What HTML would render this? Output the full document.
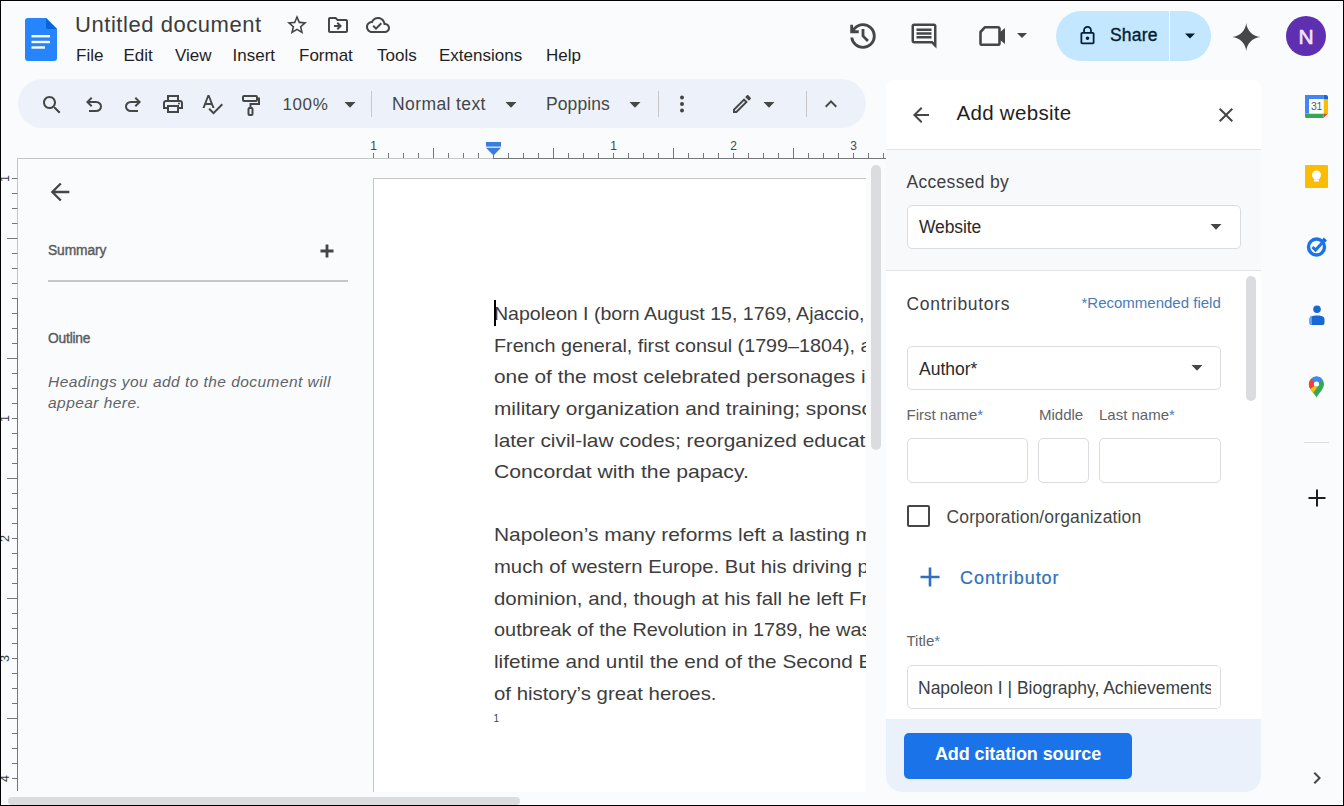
<!DOCTYPE html>
<html><head><meta charset="utf-8">
<style>
*{margin:0;padding:0;box-sizing:border-box}
html,body{width:1344px;height:806px;overflow:hidden;background:#f9fbfd;font-family:"Liberation Sans",sans-serif;color:#1f1f1f}
.a{position:absolute}
.t{position:absolute;white-space:nowrap;line-height:1}
svg{position:absolute;display:block}
.dl{left:0;font-size:18.5px;transform-origin:0 0;color:#3d3d3d}
#frame{position:absolute;left:0;top:0;width:1344px;height:806px;border:1.5px solid #000;border-left-width:1.5px;z-index:100;pointer-events:none}
</style></head><body>

<!-- ===== HEADER ===== -->
<svg style="left:25px;top:18px" width="32" height="43" viewBox="0 0 32 43">
  <path d="M3 0H21L32 11V40a3 3 0 0 1-3 3H3a3 3 0 0 1-3-3V3a3 3 0 0 1 3-3z" fill="#2684fc"/>
  <path d="M21 0L32 11H23a2 2 0 0 1-2-2z" fill="#0066da"/>
  <rect x="6.5" y="17" width="18.5" height="2.4" fill="#fff"/>
  <rect x="6.5" y="22.8" width="18.5" height="2.4" fill="#fff"/>
  <rect x="6.5" y="28.3" width="13.5" height="2.4" fill="#fff"/>
</svg>
<div class="t" style="left:75px;top:13.8px;font-size:22px;letter-spacing:0.55px;color:#3c3c3c">Untitled document</div>

<div class="t" style="left:76px;top:47.0px;font-size:17px">File</div>
<div class="t" style="left:123.5px;top:47.0px;font-size:17px">Edit</div>
<div class="t" style="left:175px;top:47.0px;font-size:17px">View</div>
<div class="t" style="left:232.5px;top:47.0px;font-size:17px">Insert</div>
<div class="t" style="left:299px;top:47.0px;font-size:17px">Format</div>
<div class="t" style="left:377px;top:47.0px;font-size:17px">Tools</div>
<div class="t" style="left:439px;top:47.0px;font-size:17px">Extensions</div>
<div class="t" style="left:546px;top:47.0px;font-size:17px">Help</div>

<!-- star -->
<svg style="left:285px;top:13px" width="24" height="24" viewBox="0 0 24 24"><path fill="#444746" d="M22 9.24l-7.19-.62L12 2 9.19 8.63 2 9.24l5.46 4.73L5.82 21 12 17.27 18.18 21l-1.63-7.03L22 9.24zM12 15.4l-3.76 2.27 1-4.28-3.32-2.88 4.38-.38L12 6.1l1.71 4.04 4.38.38-3.32 2.88 1 4.28L12 15.4z"/></svg>
<!-- folder move -->
<svg style="left:325.5px;top:13px" width="24" height="24" viewBox="0 0 24 24"><path fill="#444746" d="M20 6h-8l-2-2H4c-1.1 0-1.99.9-1.99 2L2 18c0 1.1.9 2 2 2h16c1.1 0 2-.9 2-2V8c0-1.1-.9-2-2-2zm0 12H4V6h5.17l2 2H20v10zm-7.84-6H8v2h4.16l-1.59 1.59L11.99 17 16 13.01 11.99 9l-1.41 1.41L12.16 12z"/></svg>
<!-- cloud done -->
<svg style="left:365.5px;top:13px" width="24" height="24" viewBox="0 0 24 24"><path fill="#444746" d="M19.35 10.04C18.67 6.59 15.64 4 12 4 9.110 4 6.6 5.64 5.35 8.04 2.34 8.36 0 10.91 0 14c0 3.31 2.69 6 6 6h13c2.76 0 5-2.24 5-5 0-2.64-2.05-4.78-4.65-4.960zM19 18H6c-2.21 0-4-1.79-4-4 0-2.05 1.53-3.76 3.56-3.97l1.07-.11.5-.95C8.08 7.14 9.94 6 12 6c2.62 0 4.88 1.86 5.39 4.43l.3 1.5 1.53.11c1.56.1 2.78 1.41 2.78 2.96 0 1.65-1.35 3-3 3zm-9-3.82l-2.09-2.09L6.5 13.5 10 17l6.01-6.010-1.41-1.41z"/></svg>

<!-- history -->
<svg style="left:845.5px;top:18.5px" width="34" height="34" viewBox="0 -960 960 960"><path fill="#444746" d="M480-120q-138 0-240.5-91.5T122-440h82q14 104 92.5 172T480-200q117 0 198.5-81.5T760-480q0-117-81.5-198.5T480-760q-69 0-129 32t-101 88h110v80H120v-240h80v94q51-64 124.5-99T480-840q75 0 140.5 28.5t114 77q48.5 48.5 77 114T840-480q0 75-28.5 140.5t-77 114q-48.5 48.5-114 77T480-120Zm112-192L440-464v-216h80v184l128 128-56 56Z"/></svg>
<!-- comment -->
<svg style="left:909px;top:21px" width="30" height="30" viewBox="0 0 24 24"><path fill="#444746" d="M21.99 4c0-1.1-.89-2-1.99-2H4c-1.1 0-2 .9-2 2v12c0 1.1.9 2 2 2h14l4 4-.01-18zM20 4v13.17L18.83 16H4V4h16zM6 12h12v2H6zm0-3h12v2H6zm0-3h12v2H6z"/></svg>
<!-- meet -->
<svg style="left:978px;top:24px" width="30" height="24" viewBox="0 0 30 24"><path fill="none" stroke="#444746" stroke-width="2.6" stroke-linejoin="round" d="M7 3.2H20a1.5 1.5 0 0 1 1.5 1.5V19.3a1.5 1.5 0 0 1-1.5 1.5H4a1.5 1.5 0 0 1-1.5-1.5V8z"/><path fill="#444746" d="M21.5 8.5L27 4v16l-5.5-4.5z"/></svg>
<svg style="left:1015px;top:30px" width="14" height="10" viewBox="0 0 14 10"><path fill="#444746" d="M2 3h10l-5 5z"/></svg>

<!-- share -->
<div class="a" style="left:1056px;top:11px;width:155px;height:50px;border-radius:25px;background:#c2e7ff"></div>
<div class="a" style="left:1168.5px;top:11px;width:1.5px;height:50px;background:#f9fbfd"></div>
<svg style="left:1076.5px;top:24.6px" width="21" height="21" viewBox="0 0 24 24"><path fill="#001d35" d="M18 8h-1V6c0-2.76-2.24-5-5-5S7 3.24 7 6v2H6c-1.1 0-2 .9-2 2v10c0 1.1.9 2 2 2h12c1.1 0 2-.9 2-2V10c0-1.1-.9-2-2-2zM9 6c0-1.66 1.34-3 3-3s3 1.34 3 3v2H9V6zm9 14H6V10h12v10zm-6-3c1.1 0 2-.9 2-2s-.9-2-2-2-2 .9-2 2 .9 2 2 2z"/></svg>
<div class="t" style="left:1110px;top:26.8px;font-size:17.5px;color:#001d35;letter-spacing:0.2px;-webkit-text-stroke:0.35px #001d35">Share</div>
<svg style="left:1183px;top:31px" width="14" height="10" viewBox="0 0 14 10"><path fill="#001d35" d="M2 2.5h10l-5 5z"/></svg>

<!-- gemini sparkle -->
<svg style="left:1232px;top:22.5px" width="28.5" height="28" viewBox="0 0 24 24"><path fill="#444746" d="M12 0C12.6 6.4 17.4 11.4 24 12 17.4 12.6 12.6 17.6 12 24 11.4 17.6 6.6 12.6 0 12 6.6 11.4 11.4 6.4 12 0z"/></svg>
<!-- avatar -->
<div class="a" style="left:1286px;top:16px;width:40px;height:40px;border-radius:50%;background:#5e2fb0"></div>
<div class="t" style="left:1286px;top:26px;width:40px;text-align:center;font-size:21px;color:#f0e6ff;-webkit-text-stroke:0.6px #f0e6ff">N</div>

<!-- ===== TOOLBAR ===== -->
<div class="a" style="left:18px;top:79px;width:848px;height:49px;border-radius:25px;background:#edf2fa"></div>
<!-- search -->
<svg style="left:40px;top:93px" width="24" height="24" viewBox="0 0 24 24"><path fill="#444746" d="M15.5 14h-.79l-.28-.27C15.41 12.59 16 11.11 16 9.5 16 5.91 13.09 3 9.5 3S3 5.91 3 9.5 5.91 16 9.5 16c1.61 0 3.09-.59 4.23-1.57l.27.28v.79l5 4.99L20.49 19l-4.99-5zm-6 0C7.01 14 5 11.99 5 9.5S7.01 5 9.5 5 14 7.01 14 9.5 11.99 14 9.5 14z"/></svg>
<!-- undo -->
<svg style="left:82px;top:93px" width="24" height="24" viewBox="0 -960 960 960"><path fill="#444746" d="M280-200v-80h284q63 0 109.5-40T720-420q0-60-46.5-100T564-560H312l104 104-56 56-200-200 200-200 56 56-104 104h252q97 0 166.5 63T800-420q0 94-69.5 157T564-200H280Z"/></svg>
<!-- redo -->
<svg style="left:121px;top:93px" width="24" height="24" viewBox="0 -960 960 960"><path fill="#444746" d="M396-200q-97 0-166.5-63T160-420q0-94 69.5-157T396-640h252L544-744l56-56 200 200-200 200-56-56 104-104H396q-63 0-109.5 40T240-420q0 60 46.5 100T396-280h284v80H396Z"/></svg>
<!-- print -->
<svg style="left:161px;top:92px" width="24" height="24" viewBox="0 -960 960 960"><path fill="#444746" d="M640-640v-120H320v120h-80v-200h480v200h-80Zm-480 80h640-640Zm560 100q17 0 28.5-11.5T760-500q0-17-11.5-28.5T720-540q-17 0-28.5 11.5T680-500q0 17 11.5 28.5T720-460Zm-80 260v-160H320v160h320Zm80 80H240v-160H80v-240q0-51 35-85.5t85-34.5h560q51 0 85.5 34.5T880-520v240H720v160Zm80-240v-160q0-17-11.5-28.5T760-560H200q-17 0-28.5 11.5T160-520v160h80v-80h480v80h80Z"/></svg>
<!-- spellcheck -->
<svg style="left:200px;top:92px" width="24" height="24" viewBox="0 0 24 24"><path fill="#444746" d="M12.45 16h2.09L9.43 3H7.57L2.460 16h2.09l1.12-3h5.64l1.14 3zm-6.02-5L8.5 5.48 10.57 11H6.43zm15.16.59l-8.09 8.09L9.83 16l-1.41 1.41 5.09 5.09L23 13l-1.41-1.41z"/></svg>
<!-- paint format -->
<svg style="left:239px;top:93px" width="24" height="24" viewBox="0 0 24 24"><g fill="none" stroke="#444746" stroke-width="2"><rect x="4" y="3" width="14" height="5" rx="1"/><path d="M18 5.5h2v5.5H11.5v4"/><rect x="9.5" y="15" width="4" height="7" rx="1"/></g></svg>

<div class="t" style="left:282.5px;top:96.3px;font-size:17px;color:#444746;letter-spacing:0.6px">100%</div>
<svg style="left:343px;top:98px" width="14" height="14" viewBox="0 0 14 14"><path fill="#444746" d="M1.5 4h11l-5.5 5.8z"/></svg>
<div class="a" style="left:371px;top:91px;width:1px;height:26px;background:#c7c7c7"></div>
<div class="t" style="left:392px;top:96.3px;font-size:17.5px;color:#444746;letter-spacing:0.4px">Normal text</div>
<svg style="left:504px;top:98px" width="14" height="14" viewBox="0 0 14 14"><path fill="#444746" d="M1.5 4h11l-5.5 5.8z"/></svg>
<div class="t" style="left:546px;top:96.3px;font-size:17.5px;color:#444746;letter-spacing:0.1px">Poppins</div>
<svg style="left:628px;top:98px" width="14" height="14" viewBox="0 0 14 14"><path fill="#444746" d="M1.5 4h11l-5.5 5.8z"/></svg>
<div class="a" style="left:658px;top:91px;width:1px;height:26px;background:#c7c7c7"></div>
<!-- kebab -->
<svg style="left:676px;top:94px" width="12" height="20" viewBox="0 0 12 20"><circle cx="6" cy="3.5" r="2" fill="#444746"/><circle cx="6" cy="10" r="2" fill="#444746"/><circle cx="6" cy="16.5" r="2" fill="#444746"/></svg>
<!-- pencil -->
<svg style="left:730px;top:92px" width="24" height="24" viewBox="0 0 24 24"><path fill="#444746" d="M3 17.25V21h3.75L17.81 9.94l-3.75-3.75L3 17.25zM5.92 19H5v-.92l9.06-9.06.92.92L5.92 19zM20.71 5.63l-2.34-2.34c-.2-.2-.45-.29-.71-.29s-.51.1-.7.29l-1.83 1.83 3.75 3.75 1.83-1.830c.39-.39.39-1.02 0-1.41z"/></svg>
<svg style="left:762px;top:98px" width="14" height="14" viewBox="0 0 14 14"><path fill="#444746" d="M1.5 4h11l-5.5 5.8z"/></svg>
<div class="a" style="left:806px;top:91px;width:1px;height:26px;background:#c7c7c7"></div>
<svg style="left:819px;top:92px" width="24" height="24" viewBox="0 0 24 24"><path fill="#444746" d="M12 8l-6 6 1.41 1.41L12 10.83l4.59 4.58L18 14z"/></svg>


<!-- ===== RULERS ===== -->
<svg style="left:360px;top:130px" width="540" height="32" viewBox="0 0 540 32"><line x1="13.0" y1="28.5" x2="133.0" y2="28.5" stroke="#c4c7c5" stroke-width="1"/><line x1="133.0" y1="28.5" x2="526.0" y2="28.5" stroke="#747775" stroke-width="1"/><line x1="13.5" y1="23.0" x2="13.5" y2="28.0" stroke="#747775" stroke-width="1"/><line x1="28.5" y1="23.0" x2="28.5" y2="28.0" stroke="#747775" stroke-width="1"/><line x1="43.5" y1="23.0" x2="43.5" y2="28.0" stroke="#747775" stroke-width="1"/><line x1="58.5" y1="23.0" x2="58.5" y2="28.0" stroke="#747775" stroke-width="1"/><line x1="73.5" y1="18.0" x2="73.5" y2="28.0" stroke="#747775" stroke-width="1"/><line x1="88.5" y1="23.0" x2="88.5" y2="28.0" stroke="#747775" stroke-width="1"/><line x1="103.5" y1="23.0" x2="103.5" y2="28.0" stroke="#747775" stroke-width="1"/><line x1="118.5" y1="23.0" x2="118.5" y2="28.0" stroke="#747775" stroke-width="1"/><line x1="133.5" y1="23.0" x2="133.5" y2="28.0" stroke="#747775" stroke-width="1"/><line x1="148.5" y1="23.0" x2="148.5" y2="28.0" stroke="#747775" stroke-width="1"/><line x1="163.5" y1="23.0" x2="163.5" y2="28.0" stroke="#747775" stroke-width="1"/><line x1="178.5" y1="23.0" x2="178.5" y2="28.0" stroke="#747775" stroke-width="1"/><line x1="193.5" y1="18.0" x2="193.5" y2="28.0" stroke="#747775" stroke-width="1"/><line x1="208.5" y1="23.0" x2="208.5" y2="28.0" stroke="#747775" stroke-width="1"/><line x1="223.5" y1="23.0" x2="223.5" y2="28.0" stroke="#747775" stroke-width="1"/><line x1="238.5" y1="23.0" x2="238.5" y2="28.0" stroke="#747775" stroke-width="1"/><line x1="253.5" y1="23.0" x2="253.5" y2="28.0" stroke="#747775" stroke-width="1"/><line x1="268.5" y1="23.0" x2="268.5" y2="28.0" stroke="#747775" stroke-width="1"/><line x1="283.5" y1="23.0" x2="283.5" y2="28.0" stroke="#747775" stroke-width="1"/><line x1="298.5" y1="23.0" x2="298.5" y2="28.0" stroke="#747775" stroke-width="1"/><line x1="313.5" y1="18.0" x2="313.5" y2="28.0" stroke="#747775" stroke-width="1"/><line x1="328.5" y1="23.0" x2="328.5" y2="28.0" stroke="#747775" stroke-width="1"/><line x1="343.5" y1="23.0" x2="343.5" y2="28.0" stroke="#747775" stroke-width="1"/><line x1="358.5" y1="23.0" x2="358.5" y2="28.0" stroke="#747775" stroke-width="1"/><line x1="373.5" y1="23.0" x2="373.5" y2="28.0" stroke="#747775" stroke-width="1"/><line x1="388.5" y1="23.0" x2="388.5" y2="28.0" stroke="#747775" stroke-width="1"/><line x1="403.5" y1="23.0" x2="403.5" y2="28.0" stroke="#747775" stroke-width="1"/><line x1="418.5" y1="23.0" x2="418.5" y2="28.0" stroke="#747775" stroke-width="1"/><line x1="433.5" y1="18.0" x2="433.5" y2="28.0" stroke="#747775" stroke-width="1"/><line x1="448.5" y1="23.0" x2="448.5" y2="28.0" stroke="#747775" stroke-width="1"/><line x1="463.5" y1="23.0" x2="463.5" y2="28.0" stroke="#747775" stroke-width="1"/><line x1="478.5" y1="23.0" x2="478.5" y2="28.0" stroke="#747775" stroke-width="1"/><line x1="493.5" y1="23.0" x2="493.5" y2="28.0" stroke="#747775" stroke-width="1"/><line x1="508.5" y1="23.0" x2="508.5" y2="28.0" stroke="#747775" stroke-width="1"/><line x1="523.5" y1="23.0" x2="523.5" y2="28.0" stroke="#747775" stroke-width="1"/><text x="13.5" y="20.0" font-size="12" text-anchor="middle" fill="#474747" font-family="Liberation Sans">1</text><text x="253.5" y="20.0" font-size="12" text-anchor="middle" fill="#474747" font-family="Liberation Sans">1</text><text x="373.5" y="20.0" font-size="12" text-anchor="middle" fill="#474747" font-family="Liberation Sans">2</text><text x="493.5" y="20.0" font-size="12" text-anchor="middle" fill="#474747" font-family="Liberation Sans">3</text></svg>
<svg style="left:0px;top:150px" width="20" height="650" viewBox="0 0 20 650"><line x1="17.5" y1="8.0" x2="17.5" y2="148.0" stroke="#c4c7c5" stroke-width="1"/><line x1="17.5" y1="148.0" x2="17.5" y2="641.0" stroke="#747775" stroke-width="1"/><line x1="12" y1="28.5" x2="17.5" y2="28.5" stroke="#747775" stroke-width="1"/><text x="0" y="0" font-size="12.5" text-anchor="middle" fill="#3c3c3c" font-family="Liberation Sans" transform="translate(9 28.5) rotate(-90)">1</text><line x1="12" y1="43.5" x2="17.5" y2="43.5" stroke="#747775" stroke-width="1"/><line x1="12" y1="58.5" x2="17.5" y2="58.5" stroke="#747775" stroke-width="1"/><line x1="12" y1="73.5" x2="17.5" y2="73.5" stroke="#747775" stroke-width="1"/><line x1="7" y1="88.5" x2="17.5" y2="88.5" stroke="#747775" stroke-width="1"/><line x1="12" y1="103.5" x2="17.5" y2="103.5" stroke="#747775" stroke-width="1"/><line x1="12" y1="118.5" x2="17.5" y2="118.5" stroke="#747775" stroke-width="1"/><line x1="12" y1="133.5" x2="17.5" y2="133.5" stroke="#747775" stroke-width="1"/><line x1="12" y1="148.5" x2="17.5" y2="148.5" stroke="#747775" stroke-width="1"/><line x1="12" y1="163.5" x2="17.5" y2="163.5" stroke="#747775" stroke-width="1"/><line x1="12" y1="178.5" x2="17.5" y2="178.5" stroke="#747775" stroke-width="1"/><line x1="12" y1="193.5" x2="17.5" y2="193.5" stroke="#747775" stroke-width="1"/><line x1="7" y1="208.5" x2="17.5" y2="208.5" stroke="#747775" stroke-width="1"/><line x1="12" y1="223.5" x2="17.5" y2="223.5" stroke="#747775" stroke-width="1"/><line x1="12" y1="238.5" x2="17.5" y2="238.5" stroke="#747775" stroke-width="1"/><line x1="12" y1="253.5" x2="17.5" y2="253.5" stroke="#747775" stroke-width="1"/><line x1="12" y1="268.5" x2="17.5" y2="268.5" stroke="#747775" stroke-width="1"/><text x="0" y="0" font-size="12.5" text-anchor="middle" fill="#3c3c3c" font-family="Liberation Sans" transform="translate(9 268.5) rotate(-90)">1</text><line x1="12" y1="283.5" x2="17.5" y2="283.5" stroke="#747775" stroke-width="1"/><line x1="12" y1="298.5" x2="17.5" y2="298.5" stroke="#747775" stroke-width="1"/><line x1="12" y1="313.5" x2="17.5" y2="313.5" stroke="#747775" stroke-width="1"/><line x1="7" y1="328.5" x2="17.5" y2="328.5" stroke="#747775" stroke-width="1"/><line x1="12" y1="343.5" x2="17.5" y2="343.5" stroke="#747775" stroke-width="1"/><line x1="12" y1="358.5" x2="17.5" y2="358.5" stroke="#747775" stroke-width="1"/><line x1="12" y1="373.5" x2="17.5" y2="373.5" stroke="#747775" stroke-width="1"/><line x1="12" y1="388.5" x2="17.5" y2="388.5" stroke="#747775" stroke-width="1"/><text x="0" y="0" font-size="12.5" text-anchor="middle" fill="#3c3c3c" font-family="Liberation Sans" transform="translate(9 388.5) rotate(-90)">2</text><line x1="12" y1="403.5" x2="17.5" y2="403.5" stroke="#747775" stroke-width="1"/><line x1="12" y1="418.5" x2="17.5" y2="418.5" stroke="#747775" stroke-width="1"/><line x1="12" y1="433.5" x2="17.5" y2="433.5" stroke="#747775" stroke-width="1"/><line x1="7" y1="448.5" x2="17.5" y2="448.5" stroke="#747775" stroke-width="1"/><line x1="12" y1="463.5" x2="17.5" y2="463.5" stroke="#747775" stroke-width="1"/><line x1="12" y1="478.5" x2="17.5" y2="478.5" stroke="#747775" stroke-width="1"/><line x1="12" y1="493.5" x2="17.5" y2="493.5" stroke="#747775" stroke-width="1"/><line x1="12" y1="508.5" x2="17.5" y2="508.5" stroke="#747775" stroke-width="1"/><text x="0" y="0" font-size="12.5" text-anchor="middle" fill="#3c3c3c" font-family="Liberation Sans" transform="translate(9 508.5) rotate(-90)">3</text><line x1="12" y1="523.5" x2="17.5" y2="523.5" stroke="#747775" stroke-width="1"/><line x1="12" y1="538.5" x2="17.5" y2="538.5" stroke="#747775" stroke-width="1"/><line x1="12" y1="553.5" x2="17.5" y2="553.5" stroke="#747775" stroke-width="1"/><line x1="7" y1="568.5" x2="17.5" y2="568.5" stroke="#747775" stroke-width="1"/><line x1="12" y1="583.5" x2="17.5" y2="583.5" stroke="#747775" stroke-width="1"/><line x1="12" y1="598.5" x2="17.5" y2="598.5" stroke="#747775" stroke-width="1"/><line x1="12" y1="613.5" x2="17.5" y2="613.5" stroke="#747775" stroke-width="1"/><line x1="12" y1="628.5" x2="17.5" y2="628.5" stroke="#747775" stroke-width="1"/><text x="0" y="0" font-size="12.5" text-anchor="middle" fill="#3c3c3c" font-family="Liberation Sans" transform="translate(9 628.5) rotate(-90)">4</text></svg>

<svg style="left:485px;top:141px" width="17" height="16" viewBox="0 0 17 16"><rect x="1" y="1" width="15" height="4.6" fill="#3b7ddd"/><path d="M1 6.8H16L8.5 14.5z" fill="#3b7ddd"/></svg>
<!-- left panel top border -->
<div class="a" style="left:18px;top:158px;width:355px;height:1px;background:#c4c7c5"></div>

<!-- ===== LEFT PANEL ===== -->
<svg style="left:46px;top:178px" width="28" height="28" viewBox="0 0 24 24"><path fill="#444746" d="M20 11H7.83l5.59-5.59L12 4l-8 8 8 8 1.41-1.41L7.83 13H20v-2z"/></svg>
<div class="t" style="left:48px;top:244px;font-size:13.8px;color:#595b5d;letter-spacing:-0.1px;-webkit-text-stroke:0.4px #595b5d">Summary</div>
<svg style="left:319px;top:242.5px" width="16" height="16" viewBox="0 0 16 16"><path fill="#444746" d="M6.6 1.5h2.8v5.1h5.1v2.8H9.4v5.1H6.6V9.4H1.5V6.6h5.1z"/></svg>
<div class="a" style="left:48px;top:280px;width:300px;height:2px;background:#c4c7c5"></div>
<div class="t" style="left:48px;top:331.8px;font-size:13.8px;color:#595b5d;letter-spacing:-0.2px;-webkit-text-stroke:0.4px #595b5d">Outline</div>
<div class="t" style="left:48px;top:375.5px;font-size:15.5px;font-style:italic;color:#5f6368;line-height:21px;top:371px;letter-spacing:0.45px">Headings you add to the document will<br>appear here.</div>

<!-- ===== DOC PAGE ===== -->
<div class="a" style="left:373px;top:178px;width:513px;height:614px;background:#fff;border-left:1px solid #c7c7c7;border-top:1px solid #c7c7c7"></div>
<div class="a" style="left:866px;top:159px;width:20px;height:633px;background:#f9fbfd"></div>
<div class="a" style="left:871px;top:165px;width:10px;height:285px;border-radius:5px;background:#dadce0"></div>
<div class="a" id="doc" style="left:494px;top:290px;width:372px;height:460px;overflow:hidden">
<div class="t dl" style="top:14.95px;transform:scaleX(1.0565)">Napoleon I (born August 15, 1769, Ajaccio, Corsica—died May 5, 1821, St. Helena Island),</div>
<div class="t dl" style="top:46.59px;transform:scaleX(1.0671)">French general, first consul (1799–1804), and emperor of the French (1804–1814/15),</div>
<div class="t dl" style="top:78.23px;transform:scaleX(1.1254)">one of the most celebrated personages in the history of the West. He revolutionized</div>
<div class="t dl" style="top:109.87px;transform:scaleX(1.1274)">military organization and training; sponsored the Napoleonic Code, the prototype of</div>
<div class="t dl" style="top:141.51px;transform:scaleX(1.1285)">later civil-law codes; reorganized education; and established the long-lived</div>
<div class="t dl" style="top:173.15px;transform:scaleX(1.1436)">Concordat with the papacy.</div>
<div class="t dl" style="top:236.43px;transform:scaleX(1.1317)">Napoleon’s many reforms left a lasting mark on the institutions of France and of</div>
<div class="t dl" style="top:268.07px;transform:scaleX(1.0945)">much of western Europe. But his driving passion was the military expansion of French</div>
<div class="t dl" style="top:299.71px;transform:scaleX(1.1030)">dominion, and, though at his fall he left France little larger than it had been at the</div>
<div class="t dl" style="top:331.35px;transform:scaleX(1.0764)">outbreak of the Revolution in 1789, he was almost unanimously revered during his</div>
<div class="t dl" style="top:362.99px;transform:scaleX(1.1216)">lifetime and until the end of the Second Empire under his nephew Napoleon III as one</div>
<div class="t dl" style="top:394.63px;transform:scaleX(1.1003)">of history’s great heroes.</div>
</div>
<div class="a" style="left:494px;top:299.5px;width:2px;height:26px;background:#000"></div>
<div class="t" style="left:493.5px;top:713.5px;font-size:10px;color:#444">1</div>
<!-- bottom scrollbar -->
<div class="a" style="left:8px;top:797px;width:512px;height:8px;border-radius:4px;background:#dadce0"></div>

<!-- ===== SIDE PANEL ===== -->
<div class="a" style="left:886px;top:80px;width:375px;height:712px;background:#fff;border-radius:8px 8px 16px 16px;overflow:hidden">
  <div class="a" style="left:0;top:69px;width:375px;height:1px;background:#e3e3e3"></div>
  <div class="a" style="left:0;top:70px;width:375px;height:120px;background:#f8f9fa"></div>
  <div class="a" style="left:0;top:190px;width:375px;height:1px;background:#e3e3e3"></div>
  <div class="a" style="left:0;top:639px;width:375px;height:73px;background:#ebf1fb"></div>
</div>
<svg style="left:908.5px;top:103px" width="24" height="24" viewBox="0 0 24 24"><path fill="#444746" d="M20 11H7.83l5.59-5.59L12 4l-8 8 8 8 1.41-1.41L7.83 13H20v-2z"/></svg>
<div class="t" style="left:956.5px;top:102.5px;font-size:20.5px;color:#1f1f1f;letter-spacing:0.3px">Add website</div>
<svg style="left:1214px;top:103px" width="24" height="24" viewBox="0 0 24 24"><path fill="#444746" d="M19 6.41L17.59 5 12 10.59 6.41 5 5 6.41 10.59 12 5 17.59 6.41 19 12 13.41 17.59 19 19 17.59 13.41 12z"/></svg>

<div class="t" style="left:906.5px;top:174.2px;font-size:17.5px;color:#3c4043;letter-spacing:0.3px">Accessed by</div>
<div class="a" style="left:906.5px;top:205px;width:334px;height:44px;background:#fff;border:1px solid #dadce0;border-radius:5px"></div>
<div class="t" style="left:919px;top:218.6px;font-size:17.5px;color:#2a2a2a;letter-spacing:-0.1px">Website</div>
<svg style="left:1209px;top:220px" width="14" height="14" viewBox="0 0 14 14"><path fill="#444746" d="M1.5 4h11l-5.5 5.8z"/></svg>

<div class="t" style="left:906.5px;top:295.5px;font-size:17.5px;color:#3c4043;letter-spacing:0.7px">Contributors</div>
<div class="t" style="left:1081.5px;top:294.6px;font-size:15px;color:#4a7bb7">*Recommended field</div>
<div class="a" style="left:1246px;top:276px;width:10px;height:125px;border-radius:5px;background:#dadce0"></div>

<div class="a" style="left:906.5px;top:346px;width:314px;height:43.5px;background:#fff;border:1px solid #dadce0;border-radius:5px"></div>
<div class="t" style="left:919px;top:361.0px;font-size:17.5px;color:#2a2a2a">Author*</div>
<svg style="left:1189.5px;top:361px" width="14" height="14" viewBox="0 0 14 14"><path fill="#444746" d="M1.5 4h11l-5.5 5.8z"/></svg>

<div class="t" style="left:906.5px;top:407px;font-size:15px;color:#5f6368">First name<span style="color:#4a7bb7">*</span></div>
<div class="t" style="left:1039px;top:407px;font-size:15px;color:#5f6368">Middle</div>
<div class="t" style="left:1099px;top:407px;font-size:15px;color:#5f6368">Last name<span style="color:#4a7bb7">*</span></div>
<div class="a" style="left:906.5px;top:438px;width:121.5px;height:44.5px;background:#fff;border:1px solid #dadce0;border-radius:5px"></div>
<div class="a" style="left:1038px;top:438px;width:51px;height:44.5px;background:#fff;border:1px solid #dadce0;border-radius:5px"></div>
<div class="a" style="left:1099px;top:438px;width:122px;height:44.5px;background:#fff;border:1px solid #dadce0;border-radius:5px"></div>

<div class="a" style="left:907px;top:504.5px;width:22.5px;height:22px;border:2px solid #444746;border-radius:2px"></div>
<div class="t" style="left:946.5px;top:508.6px;font-size:17.5px;color:#444746;letter-spacing:0.13px">Corporation/organization</div>

<svg style="left:920px;top:567px" width="20" height="20" viewBox="0 0 20 20"><path fill="#2f6fbd" d="M8.7 0.5h2.6v8.2h8.2v2.6h-8.2v8.2H8.7v-8.2H0.5V8.7h8.2z"/></svg>
<div class="t" style="left:960px;top:568.6px;font-size:18px;color:#2f6fbd;letter-spacing:0.95px;-webkit-text-stroke:0.2px #2f6fbd">Contributor</div>

<div class="t" style="left:906.5px;top:633px;font-size:15px;color:#5f6368">Title<span style="color:#4a7bb7">*</span></div>
<div class="a" style="left:906.5px;top:665px;width:314.5px;height:44px;background:#fff;border:1px solid #dadce0;border-radius:5px;overflow:hidden">
  <div class="t" style="left:10.5px;top:14px;font-size:17.5px;color:#3c4043">Napoleon I | Biography, Achievements, &amp; Facts</div>
  <div class="a" style="left:303px;top:0;width:12px;height:44px;background:#fff"></div>
</div>

<div class="a" style="left:904px;top:732.5px;width:228px;height:46px;border-radius:5px;background:#1a73e8"></div>
<div class="t" style="left:904px;top:745.3px;width:228px;text-align:center;font-size:18px;font-weight:bold;color:#fff;letter-spacing:-0.1px">Add citation source</div>

<!-- ===== RIGHT SIDEBAR ===== -->
<svg style="left:1305px;top:95px" width="23" height="23" viewBox="0 0 23 23">
  <path d="M0 0H18.5V4.2H4.2V18.5H0z" fill="#4285f4"/>
  <path d="M0 18.5H18.5V23H1.5a1.5 1.5 0 0 1-1.5-1.5z" fill="#34a853"/>
  <path d="M18.5 4.2H23V18.5H18.5z" fill="#fbbc04"/>
  <path d="M18.5 18.5H23L18.5 23z" fill="#ea4335"/>
  <path d="M18.5 0V4.2H23V2a2 2 0 0 0-2-2z" fill="#1967d2"/>
  <rect x="4.2" y="4.2" width="14.3" height="14.3" fill="#fff"/>
  <text x="11.4" y="15.3" font-size="10.5" text-anchor="middle" fill="#4a5a84" font-family="Liberation Sans" letter-spacing="-0.4">31</text>
</svg>
<svg style="left:1305px;top:165px" width="23" height="23" viewBox="0 0 23 23">
  <rect width="23" height="23" fill="#fbbc04" rx="1"/>
  <circle cx="11.5" cy="10" r="4.5" fill="#fff"/>
  <rect x="9" y="14.5" width="5" height="2" fill="#fff"/>
</svg>
<svg style="left:1306px;top:235px" width="23" height="23" viewBox="0 0 23 23">
  <circle cx="10.5" cy="12" r="8" fill="none" stroke="#1a73e8" stroke-width="3.4"/>
  <path d="M6.5 12l3 3 7.5-8" fill="none" stroke="#1a73e8" stroke-width="3" stroke-linejoin="miter"/>
  <path d="M17 3.5l3 3" stroke="#1967d2" stroke-width="2.5"/>
</svg>
<svg style="left:1307px;top:305px" width="20" height="22" viewBox="0 0 20 22">
  <circle cx="10" cy="4.2" r="3.8" fill="#1967d2"/>
  <path d="M2.5 14.5C2.5 11.5 5 10.5 10 10.5s7.5 1 7.5 4V18a2 2 0 0 1-2 2h-11a2 2 0 0 1-2-2z" fill="#1967d2"/>
  <path d="M2.5 14.5C2.5 12 3.5 11 5 10.8V20h-.5a2 2 0 0 1-2-2z" fill="#669df6"/>
</svg>
<svg style="left:1308px;top:376px" width="17" height="22" viewBox="0 0 17 22">
  <path d="M8.5 0.5A7.5 7.5 0 0 1 16 8c0 5-5 9-7.5 13.5C6 17 1 13 1 8A7.5 7.5 0 0 1 8.5 0.5z" fill="#34a853"/>
  <path d="M3.2 2.8A7.5 7.5 0 0 1 14.5 3.5L10.8 7.2 A2.6 2.6 0 0 0 6.3 6.4z" fill="#4285f4"/>
  <path d="M3.2 2.8L6.3 6.4A2.6 2.6 0 0 0 6.4 9.8L2.4 13A7.5 7.5 0 0 1 3.2 2.8z" fill="#ea4335"/>
  <path d="M2.4 13L6.4 9.8A2.6 2.6 0 0 0 10 10.6L5 17z" fill="#fbbc04"/>
  <circle cx="8.5" cy="8" r="2.6" fill="#fff"/>
</svg>
<div class="a" style="left:1304px;top:442px;width:25px;height:1px;background:#dadce0"></div>
<svg style="left:1306.5px;top:487.5px" width="20" height="20" viewBox="0 0 20 20"><path fill="#1f1f1f" d="M9 1.5h2v7.5h7.5v2h-7.5v7.5H9v-7.5H1.5V9H9z"/></svg>
<svg style="left:1305px;top:766px" width="24" height="24" viewBox="0 0 24 24"><path fill="#444746" d="M10 6L8.59 7.41 13.17 12l-4.58 4.59L10 18l6-6z"/></svg>

<div id="frame"></div>
</body></html>
